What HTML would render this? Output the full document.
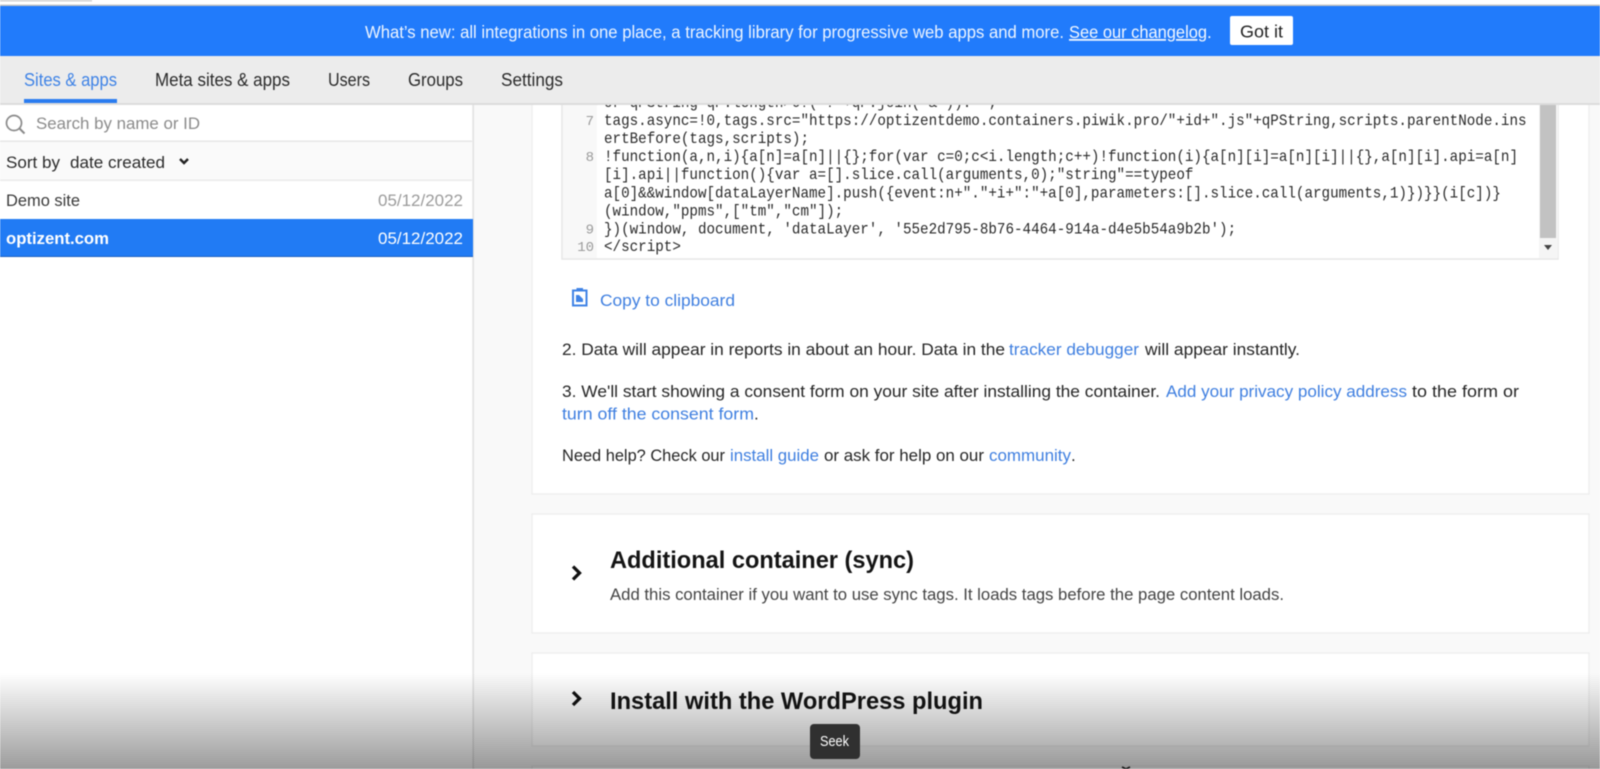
<!DOCTYPE html>
<html><head><meta charset="utf-8"><title>Sites &amp; apps</title>
<style>
html,body{margin:0;padding:0;width:1600px;height:769px;overflow:hidden;background:#fff}
svg{display:block;filter:blur(.45px)}
text{font-family:"Liberation Sans",sans-serif;white-space:pre}
.m{font-family:"Liberation Mono",monospace;font-size:15.5px;fill:#2a2a2a}
.n{font-family:"Liberation Mono",monospace;font-size:14px;fill:#9a9a9a;text-anchor:end}
.t{font-size:17px;fill:#262626}
.l{font-size:17px;fill:#3f7fe0}
.nav{font-size:18px;fill:#2b2b2b}
.s{font-size:17px}
</style></head><body>
<svg width="1600" height="769" viewBox="0 0 1600 769" xmlns="http://www.w3.org/2000/svg">
<defs><linearGradient id="g" x1="0" y1="0" x2="0" y2="1"><stop offset="0" stop-color="#000" stop-opacity="0"/><stop offset="1" stop-color="#000" stop-opacity=".39"/></linearGradient></defs>
<rect width="1600" height="769" fill="#f9f9f9"/>
<!-- sidebar -->
<rect x="0" y="103" width="472" height="666" fill="#fff"/>
<rect x="472.5" y="103" width="1.5" height="666" fill="#e2e2e2"/>
<rect x="0" y="141" width="472" height="39" fill="#fafafa"/>
<rect x="0" y="140.5" width="472" height="1.5" fill="#e6e6e6"/>
<rect x="0" y="179.5" width="472" height="1.5" fill="#ebebeb"/>
<circle cx="14" cy="123" r="7.5" fill="none" stroke="#8a8a8a" stroke-width="1.7"/>
<path d="M19.5 128.5L24.5 133.5" stroke="#8a8a8a" stroke-width="2"/>
<text x="36" y="129" class="s" fill="#8b8b8b" textLength="164" lengthAdjust="spacingAndGlyphs">Search by name or ID</text>
<text x="6" y="168" class="s" fill="#2b2b2b" textLength="54" lengthAdjust="spacingAndGlyphs">Sort by</text>
<text x="70" y="168" class="s" fill="#2b2b2b" textLength="95" lengthAdjust="spacingAndGlyphs">date created</text>
<path d="M180 159l4 4 4-4" fill="none" stroke="#222" stroke-width="2.4"/>
<text x="6" y="206" class="s" fill="#3a3a3a" textLength="74" lengthAdjust="spacingAndGlyphs">Demo site</text>
<text x="378" y="206" class="s" fill="#9b9b9b" textLength="85" lengthAdjust="spacingAndGlyphs">05/12/2022</text>
<rect x="0" y="219" width="473" height="38" fill="#217bf4"/>
<rect x="0" y="256" width="473" height="1" fill="#1a5fc0"/>
<text x="6" y="244" class="s" font-weight="700" fill="#fff" textLength="103" lengthAdjust="spacingAndGlyphs">optizent.com</text>
<text x="378" y="244" class="s" fill="#fff" textLength="85" lengthAdjust="spacingAndGlyphs">05/12/2022</text>
<!-- card 1 -->
<rect x="532" y="90" width="1057" height="404" fill="#fff" stroke="#efefef" stroke-width="1.5"/>
<rect x="562" y="100" width="996" height="159" fill="#fff" stroke="#e6e6e6" stroke-width="1.5"/>
<rect x="563" y="100" width="34" height="158" fill="#f8f8f8"/>
<rect x="1539" y="100" width="19" height="158" fill="#f5f5f5"/>
<rect x="1540" y="100" width="16" height="138" fill="#c2c2c2"/>
<path d="M1544 245h8l-4 5z" fill="#444"/>
<text x="594" y="125" class="n">7</text>
<text x="594" y="161" class="n">8</text>
<text x="594" y="233.5" class="n">9</text>
<text x="594" y="251" class="n">10</text>
<g transform="translate(604 0) scale(.919 1)">
<text x="0" y="107" class="m">or qPString=qP.length&gt;0?("?"+qP.join("&amp;")):"";</text>
<text x="0" y="125" class="m">tags.async=!0,tags.src="https://optizentdemo.containers.piwik.pro/"+id+".js"+qPString,scripts.parentNode.ins</text>
<text x="0" y="143" class="m">ertBefore(tags,scripts);</text>
<text x="0" y="161" class="m">!function(a,n,i){a[n]=a[n]||{};for(var c=0;c&lt;i.length;c++)!function(i){a[n][i]=a[n][i]||{},a[n][i].api=a[n]</text>
<text x="0" y="179" class="m">[i].api||function(){var a=[].slice.call(arguments,0);"string"==typeof</text>
<text x="0" y="197.5" class="m">a[0]&amp;&amp;window[dataLayerName].push({event:n+"."+i+":"+a[0],parameters:[].slice.call(arguments,1)})}}(i[c])}</text>
<text x="0" y="215.5" class="m">(window,"ppms",["tm","cm"]);</text>
<text x="0" y="233.5" class="m">})(window, document, 'dataLayer', '55e2d795-8b76-4464-914a-d4e5b54a9b2b');</text>
<text x="0" y="251" class="m">&lt;/script&gt;</text>
</g>
<!-- copy -->
<path d="M573 290.5h13.5v15H573z" fill="none" stroke="#3f83e6" stroke-width="2"/>
<rect x="576.5" y="288" width="6.5" height="3.5" fill="#3f83e6"/>
<path d="M576 295h3l4 4v3h-7z" fill="#3f83e6"/>
<text x="600" y="306" class="l" textLength="135" lengthAdjust="spacingAndGlyphs">Copy to clipboard</text>
<text x="562" y="355" class="t" textLength="443" lengthAdjust="spacingAndGlyphs">2. Data will appear in reports in about an hour. Data in the</text>
<text x="1009" y="355" class="l" textLength="130" lengthAdjust="spacingAndGlyphs">tracker debugger</text>
<text x="1145" y="355" class="t" textLength="155" lengthAdjust="spacingAndGlyphs">will appear instantly.</text>
<text x="562" y="397" class="t" textLength="598" lengthAdjust="spacingAndGlyphs">3. We'll start showing a consent form on your site after installing the container.</text>
<text x="1166" y="397" class="l" textLength="241" lengthAdjust="spacingAndGlyphs">Add your privacy policy address</text>
<text x="1412" y="397" class="t" textLength="107" lengthAdjust="spacingAndGlyphs">to the form or</text>
<text x="562" y="419.5" class="l" textLength="192" lengthAdjust="spacingAndGlyphs">turn off the consent form</text>
<text x="754" y="419.5" class="t">.</text>
<text x="562" y="461" class="t" textLength="163" lengthAdjust="spacingAndGlyphs">Need help? Check our</text>
<text x="730" y="461" class="l" textLength="89" lengthAdjust="spacingAndGlyphs">install guide</text>
<text x="824" y="461" class="t" textLength="160" lengthAdjust="spacingAndGlyphs">or ask for help on our</text>
<text x="989" y="461" class="l" textLength="82" lengthAdjust="spacingAndGlyphs">community</text>
<text x="1071" y="461" class="t">.</text>
<!-- cards -->
<rect x="532" y="514" width="1057" height="119" fill="#fff" stroke="#efefef" stroke-width="1.5"/>
<path d="M573 566.5l6.5 6.5-6.5 6.5" fill="none" stroke="#111" stroke-width="3.3"/>
<text x="610" y="568" font-size="24.5" font-weight="700" fill="#141414" textLength="304" lengthAdjust="spacingAndGlyphs">Additional container (sync)</text>
<text x="610" y="600" font-size="17" fill="#444" textLength="674" lengthAdjust="spacingAndGlyphs">Add this container if you want to use sync tags. It loads tags before the page content loads.</text>
<rect x="532" y="653" width="1057" height="93" fill="#fff" stroke="#efefef" stroke-width="1.5"/>
<path d="M573 692l6.5 6.5-6.5 6.5" fill="none" stroke="#111" stroke-width="3.3"/>
<text x="610" y="709" font-size="24.5" font-weight="700" fill="#141414" textLength="373" lengthAdjust="spacingAndGlyphs">Install with the WordPress plugin</text>
<rect x="532" y="766" width="1057" height="6" fill="#fff" stroke="#efefef" stroke-width="1.5"/>
<path d="M1122 767l4 2 4-2" fill="none" stroke="#222" stroke-width="1.6"/>
<!-- nav -->
<rect x="0" y="56" width="1600" height="47" fill="#ececec"/>
<rect x="0" y="103" width="1600" height="2" fill="#dcdcdc"/>
<text x="24" y="86" class="nav" style="fill:#3f83e6" textLength="93" lengthAdjust="spacingAndGlyphs">Sites &amp; apps</text>
<text x="155" y="86" class="nav" textLength="135" lengthAdjust="spacingAndGlyphs">Meta sites &amp; apps</text>
<text x="328" y="86" class="nav" textLength="42" lengthAdjust="spacingAndGlyphs">Users</text>
<text x="408" y="86" class="nav" textLength="55" lengthAdjust="spacingAndGlyphs">Groups</text>
<text x="501" y="86" class="nav" textLength="62" lengthAdjust="spacingAndGlyphs">Settings</text>
<rect x="24" y="99" width="93" height="4" fill="#2a7cf0"/>
<!-- banner -->
<rect x="0" y="0" width="1600" height="5" fill="#fff"/>
<rect x="0" y="0" width="92" height="1.5" fill="#cfcfcf"/>
<rect x="0" y="4.5" width="1600" height="1.5" fill="#c4c4c4"/>
<rect x="0" y="6" width="1600" height="50" fill="#217bfb"/>
<text x="365" y="38" font-size="17.5" fill="#fff" fill-opacity=".92" textLength="699" lengthAdjust="spacingAndGlyphs">What’s new: all integrations in one place, a tracking library for progressive web apps and more.</text>
<text x="1069" y="38" font-size="17.5" fill="#fff" fill-opacity=".95" text-decoration="underline" textLength="138" lengthAdjust="spacingAndGlyphs">See our changelog</text>
<text x="1207" y="38" font-size="17" fill="#fff">.</text>
<rect x="1230" y="16" width="63" height="29" rx="2" fill="#fff"/>
<text x="1240" y="37.5" font-size="17.5" fill="#222" textLength="43" lengthAdjust="spacingAndGlyphs">Got it</text>
<!-- video overlay -->
<rect x="0" y="673" width="1600" height="96" fill="url(#g)"/>
<rect x="810" y="724" width="50" height="35" rx="4" fill="#303030"/>
<text x="820" y="746" font-size="15" fill="#fff" textLength="29" lengthAdjust="spacingAndGlyphs">Seek</text>
</svg>
</body></html>
